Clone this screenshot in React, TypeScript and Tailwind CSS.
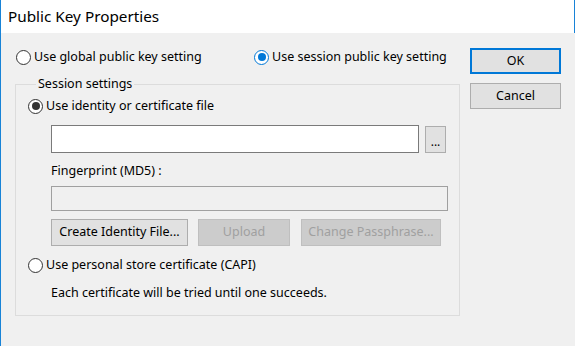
import React from 'react';

const font = { fontFamily: '"Noto Sans", "Open Sans", sans-serif' };

function Radio({ checked, focused, label }: { checked?: boolean; focused?: boolean; label: string }) {
  const ring = focused ? 'border-[#0078d7]' : 'border-[#333333]';
  const dot = focused ? 'bg-[#0078d7]' : 'bg-[#333333]';
  return (
    <div className="flex items-center h-[16px]">
      <span className={`w-[15px] h-[15px] rounded-full border bg-white flex items-center justify-center ${ring}`}>
        {checked && <span className={`w-[8px] h-[8px] rounded-full ${dot}`} />}
      </span>
      <span className="ml-[3px] text-[12.5px] text-black leading-[16px]">{label}</span>
    </div>
  );
}

function Btn({ label, disabled, w, def }: { label: string; disabled?: boolean; w: string; def?: boolean }) {
  const cls = disabled
    ? 'bg-[#cccccc] border-[#bfbfbf] text-[#a0a0a0]'
    : def
      ? 'bg-[#e1e1e1] border-[#0078d7] shadow-[inset_0_0_0_1px_#0078d7] text-black'
      : 'bg-[#e1e1e1] border-[#adadad] text-black';
  return (
    <button className={`${w} border text-[12.5px] leading-none flex items-center justify-center ${cls}`}>
      {label}
    </button>
  );
}

export default function App() {
  return (
    <div className="w-[575px] h-[346px] bg-[#f0f0f0] border-l border-[#1883d7] flex flex-col" style={font}>
      {/* Title bar */}
      <div className="h-[33px] bg-white border-r border-[#1883d7] flex items-center pl-[7px] text-[15.3px] text-black">
        Public Key Properties
      </div>

      <div className="flex pl-[14px]">
        {/* Left column */}
        <div className="w-[445px] flex flex-col">
          <div className="flex mt-[16px] pl-[1px]">
            <div className="w-[238px]">
              <Radio label="Use global public key setting" />
            </div>
            <Radio checked focused label="Use session public key setting" />
          </div>

          <fieldset className="mt-[11px] border border-[#dcdcdc] pl-[12px] pb-[14px] h-[240px]">
            <legend className="ml-[8px] px-[2px] text-[12.5px] leading-[16px] text-black">Session settings</legend>
            <div className="mt-[6px]">
              <Radio checked label="Use identity or certificate file" />
            </div>
            <div className="ml-[23px] flex flex-col">
              <div className="flex mt-[11px]">
                <div className="w-[368px] h-[28px] bg-white border border-[#7a7a7a]" />
                <button className="ml-[6px] mt-[1px] w-[21px] h-[27px] bg-[#e1e1e1] border border-[#adadad] text-[12px] leading-none flex items-center justify-center pt-[4px]">
                  ...
                </button>
              </div>
              <div className="mt-[10px] text-[12.5px] leading-[16px] text-black">Fingerprint (MD5) :</div>
              <div className="mt-[7px] w-[397px] h-[25px] bg-[#f0f0f0] border border-[#a0a0a0]" />
              <div className="mt-[8px] flex h-[27px]">
                <Btn label="Create Identity File..." w="w-[137px]" />
                <div className="ml-[10px]">
                  <Btn label="Upload" disabled w="w-[92px] h-[27px]" />
                </div>
                <div className="ml-[11px]">
                  <Btn label="Change Passphrase..." disabled w="w-[140px] h-[27px]" />
                </div>
              </div>
            </div>
            <div className="mt-[11px]">
              <Radio label="Use personal store certificate (CAPI)" />
            </div>
            <div className="ml-[23px] mt-[12px] text-[12.5px] leading-[16px] text-black">
              Each certificate will be tried until one succeeds.
            </div>
          </fieldset>
        </div>

        {/* Right column */}
        <div className="ml-[10px] mt-[15px] flex flex-col">
          <Btn label="OK" def w="w-[91px] h-[26px]" />
          <div className="mt-[9px]">
            <Btn label="Cancel" w="w-[91px] h-[26px]" />
          </div>
        </div>
      </div>
    </div>
  );
}
